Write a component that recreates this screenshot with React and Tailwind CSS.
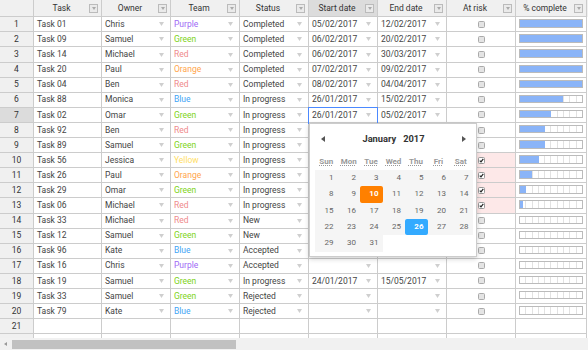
import React from "react";

// dates of rows 8-16 sit under the date picker, so they are left blank
const rows = [
  ["Task 01", "Chris", "Purple", "Completed", "05/02/2017", "12/02/2017", false, 100],
  ["Task 09", "Samuel", "Green", "Completed", "06/02/2017", "20/02/2017", false, 100],
  ["Task 14", "Michael", "Red", "Completed", "06/02/2017", "30/03/2017", false, 100],
  ["Task 20", "Paul", "Orange", "Completed", "07/02/2017", "09/02/2017", false, 100],
  ["Task 04", "Ben", "Red", "Completed", "08/02/2017", "04/04/2017", false, 100],
  ["Task 88", "Monica", "Blue", "In progress", "26/01/2017", "15/02/2017", false, 70],
  ["Task 02", "Omar", "Green", "In progress", "26/01/2017", "05/02/2017", false, 50],
  ["Task 92", "Ben", "Red", "In progress", "", "", false, 40],
  ["Task 89", "Samuel", "Green", "In progress", "", "", false, 40],
  ["Task 56", "Jessica", "Yellow", "In progress", "", "", true, 30],
  ["Task 26", "Paul", "Orange", "In progress", "", "", true, 20],
  ["Task 29", "Omar", "Green", "In progress", "", "", true, 10],
  ["Task 06", "Michael", "Red", "In progress", "", "", true, 5],
  ["Task 33", "Michael", "Red", "New", "", "", false, 0],
  ["Task 12", "Samuel", "Green", "New", "", "", false, 0],
  ["Task 96", "Kate", "Blue", "Accepted", "", "", false, 0],
  ["Task 16", "Chris", "Purple", "Accepted", "", "", false, 0],
  ["Task 19", "Samuel", "Green", "In progress", "24/01/2017", "15/05/2017", false, 0],
  ["Task 33", "Samuel", "Green", "Rejected", "", "", false, 0],
  ["Task 79", "Kate", "Blue", "Rejected", "", "", false, 0],
];

const headers = ["Task", "Owner", "Team", "Status", "Start date", "End date", "At risk", "% complete"];
const W = ["w-[34px]", "w-[68px]", "w-[69px]", "w-[69px]", "w-[69px]", "w-[69px]", "w-[69px]", "w-[69px]", "w-[71px]"];

const teamColor = {
  Purple: "text-[#a06af5]",
  Green: "text-[#7ed321]",
  Red: "text-[#ef8a8a]",
  Orange: "text-[#ffa64d]",
  Blue: "text-[#42a5f5]",
  Yellow: "text-[#ffe066]",
};

const Arrow = () => (
  <svg width="5" height="4" viewBox="0 0 5 4" className="mr-[6px] shrink-0">
    <polygon points="0,0 5,0 2.5,4" fill="#cfcfcf" />
  </svg>
);

const FilterBtn = () => (
  <span className="mr-[3px] flex h-[9px] w-[9px] shrink-0 items-center justify-center border border-[#bbb] bg-[#eaeaea]">
    <svg width="4" height="3" viewBox="0 0 4 3">
      <polygon points="0,0 4,0 2,3" fill="#aaa" />
    </svg>
  </span>
);

const Cell = ({ w, children, className = "" }) => (
  <div className={`${w} flex shrink-0 items-center border-r border-b border-[#ccc] ${className}`}>{children}</div>
);

const DropCell = ({ w, value, color = "" }) => (
  <Cell w={w}>
    <span className={`flex-1 truncate pl-[3px] ${color}`}>{value}</span>
    <Arrow />
  </Cell>
);

const Checkbox = ({ checked }) =>
  checked ? (
    <span className="flex h-[7px] w-[7px] items-center justify-center rounded-[1.5px] border border-[#999] bg-white">
      <svg width="5" height="5" viewBox="0 0 5 5">
        <path d="M0.8 2.6 L2 3.8 L4.3 0.9" stroke="#222" strokeWidth="1.2" fill="none" />
      </svg>
    </span>
  ) : (
    <span className="h-[7px] w-[7px] rounded-[1.5px] border border-[#aaa] bg-[#e4e4e4]" />
  );

const Progress = ({ value }) => (
  <div className="relative mx-[3px] mt-[2px] flex h-[8.5px] flex-1 self-start border border-[#bbb] bg-white">
    {Array.from({ length: 10 }).map((_, i) => (
      <div key={i} className={`flex-1 ${i < 9 ? "border-r border-[#e2e2e2]" : ""}`} />
    ))}
    <div className="absolute top-0 bottom-0 left-0 bg-[#8ab4f8]" style={{ width: `${value}%` }} />
  </div>
);

const days = ["Sun", "Mon", "Tue", "Wed", "Thu", "Fri", "Sat"];

const DatePicker = () => (
  <div className="absolute top-[123px] left-[309px] w-[168px] border border-[#ccc] bg-white pt-[7px] pr-[4px] pb-[4px] pl-[5px] shadow-[0_2px_5px_rgba(0,0,0,0.18)]">
    <div className="flex h-[16px] items-center justify-between pr-[6px] pl-[6px]">
      <svg width="4" height="6" viewBox="0 0 4 6">
        <polygon points="4,0 4,6 0,3" fill="#555" />
      </svg>
      <div className="flex gap-[7px] text-[9.3px] font-bold text-[#333]">
        <span>January</span>
        <span>2017</span>
      </div>
      <svg width="4" height="6" viewBox="0 0 4 6">
        <polygon points="0,0 0,6 4,3" fill="#555" />
      </svg>
    </div>
    <div className="mt-[7px] grid h-[16px] grid-cols-7 items-center text-center text-[8px] leading-[10px] font-bold text-[#999]">
      {days.map((d) => (
        <span key={d} className="underline decoration-dotted underline-offset-1">{d}</span>
      ))}
    </div>
    <div className="grid grid-cols-[repeat(7,22.5px)] auto-rows-[16.33px] text-[8px] leading-[10px] text-[#666]">
      {Array.from({ length: 31 }).map((_, i) => {
        const d = i + 1;
        let cls = "bg-[#f5f5f5]";
        if (d === 10) cls = "bg-[#ff8000] text-white font-bold rounded-[2px]";
        if (d === 26) cls = "bg-[#33aaff] text-white font-bold rounded-[2px]";
        return (
          <span key={d} className={`flex items-center justify-end pr-[4px] ${cls}`}>{d}</span>
        );
      })}
    </div>
  </div>
);

export default function App() {
  return (
    <div className="h-[350px] w-[588px] overflow-hidden bg-white font-['Roboto',sans-serif] text-[8.5px] text-[#444]">
      <div className="relative h-[338px] overflow-hidden">
        <div className="flex h-[17.3px] bg-[#f0f0f0] text-[#333]">
          <Cell w={W[0]} />
          {headers.map((h, i) => (
            <Cell key={h} w={W[i + 1]} className={i === 4 ? "bg-[#dcdcdc]" : ""}>
              <span className="flex-1 text-center">{h}</span>
              <FilterBtn />
            </Cell>
          ))}
        </div>
        {rows.map((r, idx) => (
          <div key={idx} className="flex h-[15.1px]">
            <Cell w={W[0]} className={`justify-center text-[#333] ${idx === 6 ? "bg-[#dcdcdc]" : "bg-[#f0f0f0]"}`}>
              {idx + 1}
            </Cell>
            <Cell w={W[1]}>
              <span className="pl-[3px]">{r[0]}</span>
            </Cell>
            <DropCell w={W[2]} value={r[1]} />
            <DropCell w={W[3]} value={r[2]} color={teamColor[r[2]]} />
            <DropCell w={W[4]} value={r[3]} />
            <DropCell w={W[5]} value={r[4]} />
            <DropCell w={W[6]} value={r[5]} />
            <Cell w={W[7]} className={`justify-center ${r[6] ? "bg-[#fde8e8]" : ""}`}>
              <Checkbox checked={r[6]} />
            </Cell>
            <Cell w={W[8]}>
              <Progress value={r[7]} />
            </Cell>
          </div>
        ))}
        {["21", ""].map((n, k) => (
          <div key={k} className="flex h-[15.1px]">
            <Cell w={W[0]} className="justify-center bg-[#f0f0f0] text-[#333]">{n}</Cell>
            {W.slice(1).map((w, i) => (
              <Cell key={i} w={w} />
            ))}
          </div>
        ))}
        <div className="pointer-events-none absolute top-[107px] left-[308px] h-[16.5px] w-[70px] border-[1.5px] border-[#4b89ff]" />
        <DatePicker />
      </div>
      <div className="flex h-[12px] items-center bg-[#f1f1f1]">
        <svg width="3" height="4" viewBox="0 0 3 4" className="ml-[4px]">
          <polygon points="3,0 3,4 0,2" fill="#999" />
        </svg>
        <div className="ml-[4.5px] h-[9px] w-[224px] bg-[#c1c1c1]" />
      </div>
    </div>
  );
}
